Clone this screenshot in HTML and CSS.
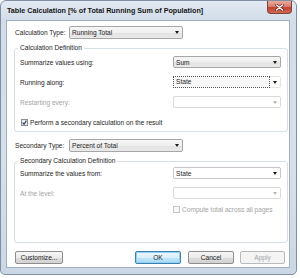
FILE: index.html
```html
<!DOCTYPE html>
<html>
<head>
<meta charset="utf-8">
<link rel="stylesheet" href="styles.css">
</head>
<body>
<div class="window">
  <div class="titlebar">
    <span class="title">Table Calculation [% of Total Running Sum of Population]</span>
    <div class="close">
      <svg width="9" height="7" viewBox="0 0 9 7"><path d="M1.5 1 L7.5 6 M7.5 1 L1.5 6" stroke="#5a2020" stroke-width="2.6" stroke-linecap="round"/><path d="M1.5 1 L7.5 6 M7.5 1 L1.5 6" stroke="#fff" stroke-width="1.4" stroke-linecap="round"/></svg>
    </div>
  </div>
  <div class="client">
    <div class="toprow">
      <span class="toplabel">Calculation Type:</span>
      <div class="combo combo-btn combo-type"><span class="combo-text">Running Total</span><span class="arrow"></span></div>
    </div>
    <fieldset class="group group-calc">
      <legend>Calculation Definition</legend>
      <div class="field">
        <span class="flabel">Summarize values using:</span>
        <div class="combo combo-btn combo-wide"><span class="combo-text">Sum</span><span class="arrow"></span></div>
      </div>
      <div class="field">
        <span class="flabel">Running along:</span>
        <div class="combo combo-focus combo-wide"><span class="focus-box">State</span><span class="arrow"></span></div>
      </div>
      <div class="field field-disabled">
        <span class="flabel">Restarting every:</span>
        <div class="combo combo-disabled combo-wide"><span class="combo-text"></span><span class="arrow arrow-disabled"></span></div>
      </div>
      <div class="check-row">
        <span class="checkbox checked"><svg width="5" height="5" viewBox="0 0 5 5"><path d="M0.6 2.6 L2 4.2 L4.4 0.6" fill="none" stroke="#2a3a5a" stroke-width="1.1"/></svg></span>
        <span>Perform a secondary calculation on the result</span>
      </div>
    </fieldset>
    <div class="toprow toprow-second">
      <span class="toplabel">Secondary Type:</span>
      <div class="combo combo-btn combo-type"><span class="combo-text">Percent of Total</span><span class="arrow"></span></div>
    </div>
    <fieldset class="group group-sec">
      <legend>Secondary Calculation Definition</legend>
      <div class="field">
        <span class="flabel">Summarize the values from:</span>
        <div class="combo combo-white combo-wide"><span class="combo-text">State</span><span class="arrow"></span></div>
      </div>
      <div class="field field-disabled">
        <span class="flabel">At the level:</span>
        <div class="combo combo-disabled combo-wide"><span class="combo-text"></span><span class="arrow arrow-disabled"></span></div>
      </div>
      <div class="check-row check-row-indent field-disabled">
        <span class="checkbox checkbox-disabled"></span>
        <span>Compute total across all pages</span>
      </div>
    </fieldset>
    <div class="buttons">
      <div class="btn btn-customize">Customize...</div>
      <div class="btn btn-default btn-ok">OK</div>
      <div class="btn">Cancel</div>
      <div class="btn btn-disabled">Apply</div>
    </div>
  </div>
</div>
</body>
</html>
```

FILE: styles.css
```css
* { box-sizing: border-box; }

body {
  margin: 0;
  background: #ffffff;
  font-family: "Liberation Sans", Arial, sans-serif;
  font-size: 6.6px;
  color: #1e1e1e;
}

.window {
  width: 297px;
  height: 275px;
  border: 1px solid #7f8ea0;
  border-radius: 6px 6px 5px 5px;
  background: linear-gradient(180deg, #e2eaf3 0px, #d2dde9 19px, #d6e0ea 60%, #cbd7e4 100%);
  padding: 0 6px 0 5px;
  display: flex;
  flex-direction: column;
}

.titlebar {
  height: 19px;
  display: flex;
  justify-content: space-between;
  align-items: flex-start;
}

.title {
  font-weight: bold;
  font-size: 7.2px;
  line-height: 19px;
  margin-left: 1px;
  color: #151515;
  white-space: nowrap;
}

.close {
  width: 25px;
  height: 13px;
  margin-right: -2px;
  border: 1px solid #83413c;
  border-top: none;
  border-radius: 0 0 4px 4px;
  background: linear-gradient(180deg, #e9a99c 0%, #d98071 45%, #c2412f 55%, #cf6a4f 100%);
  display: flex;
  align-items: center;
  justify-content: center;
}

.client {
  height: 248px;
  background: #ffffff;
  border: 1px solid #a1b1c4;
  padding: 5px 2px 0 7px;
  display: flex;
  flex-direction: column;
}

.toprow {
  display: flex;
  align-items: center;
  height: 13px;
  padding-left: 1px;
}

.toprow-second {
  margin-top: 7px;
}

.toplabel {
  width: 54px;
  white-space: nowrap;
}

.combo {
  height: 12px;
  display: flex;
  align-items: center;
  justify-content: space-between;
  border: 1px solid #a6a6a6;
  border-radius: 2px;
  padding: 0 3px 0 2px;
  white-space: nowrap;
}

.combo-type {
  width: 114px;
  height: 13px;
}

.combo-wide {
  width: 108px;
}

.combo-btn {
  background: linear-gradient(180deg, #f6f6f6 0%, #efefef 50%, #e3e3e3 51%, #e9e9e9 100%);
}

.combo-white {
  background: #ffffff;
  border-color: #c6c6c6;
}

.combo-focus {
  background: #ffffff;
  border-color: #e4e4e4;
  padding: 1px 3px 1px 0;
}

.focus-box {
  width: 97px;
  height: 12px;
  margin-top: -1px;
  margin-bottom: -1px;
  margin-left: -1px;
  border: 1px dotted #555555;
  background: #f8f8f8;
  padding-left: 2px;
  line-height: 10px;
}

.combo-disabled {
  background: #ffffff;
  border-color: #d9d9d9;
}

.arrow {
  width: 0;
  height: 0;
  border-left: 2.5px solid transparent;
  border-right: 2.5px solid transparent;
  border-top: 3px solid #1a1a1a;
}

.arrow-disabled {
  border-top-color: #b5b5b5;
}

.group {
  width: 274px;
  margin: 5px 0 0 0;
  border: 1px solid #d6dfe6;
  border-radius: 3px;
  padding: 4px 6px 3px 5px;
  min-width: 0;
}

.group legend {
  padding: 0 2px;
  margin-left: -2px;
  line-height: 8px;
  font-size: 6.6px;
  color: #1e1e1e;
}

.group-sec {
  padding-top: 2px;
  padding-bottom: 27px;
}

.field {
  display: flex;
  align-items: center;
  height: 12px;
}

.field + .field {
  margin-top: 8px;
}

.flabel {
  width: 153px;
  white-space: nowrap;
}

.field-disabled {
  color: #a3a3a3;
}

.check-row {
  display: flex;
  align-items: center;
  height: 12px;
  margin-top: 8px;
  padding-left: 1px;
  white-space: nowrap;
}

.check-row-indent {
  margin-top: 4px;
  padding-left: 153px;
}

.checkbox {
  width: 7px;
  height: 7px;
  border: 1px solid #8e8f8f;
  background: linear-gradient(180deg, #f0f0f0, #dfe5ec);
  margin-right: 2px;
  display: flex;
  align-items: center;
  justify-content: center;
}

.checkbox-disabled {
  border-color: #c6c6c6;
  background: #f7f7f7;
}

.buttons {
  display: flex;
  align-items: center;
  margin-top: 8px;
  padding-left: 1px;
  padding-right: 2px;
  gap: 6px;
}

.btn {
  width: 46px;
  height: 13px;
  border: 1px solid #8e8e8e;
  border-radius: 2px;
  background: linear-gradient(180deg, #f5f5f5 0%, #ececec 50%, #dddddd 51%, #d2d2d2 100%);
  display: flex;
  align-items: center;
  justify-content: center;
  color: #1e1e1e;
}

.btn-customize {
  width: 48px;
  margin-right: auto;
}

.btn-default {
  border-color: #3c7fb1;
  background: linear-gradient(180deg, #eef7fd 0%, #dcf0fc 50%, #bfe5fb 51%, #a8d9f6 100%);
  box-shadow: inset 0 0 0 1px #91d2f4;
}

.btn-ok {
  margin-right: 1px;
}

.btn-disabled {
  width: 45px;
  border-color: #b8bbbd;
  background: #f4f4f4;
  color: #a6a6a6;
}
```
